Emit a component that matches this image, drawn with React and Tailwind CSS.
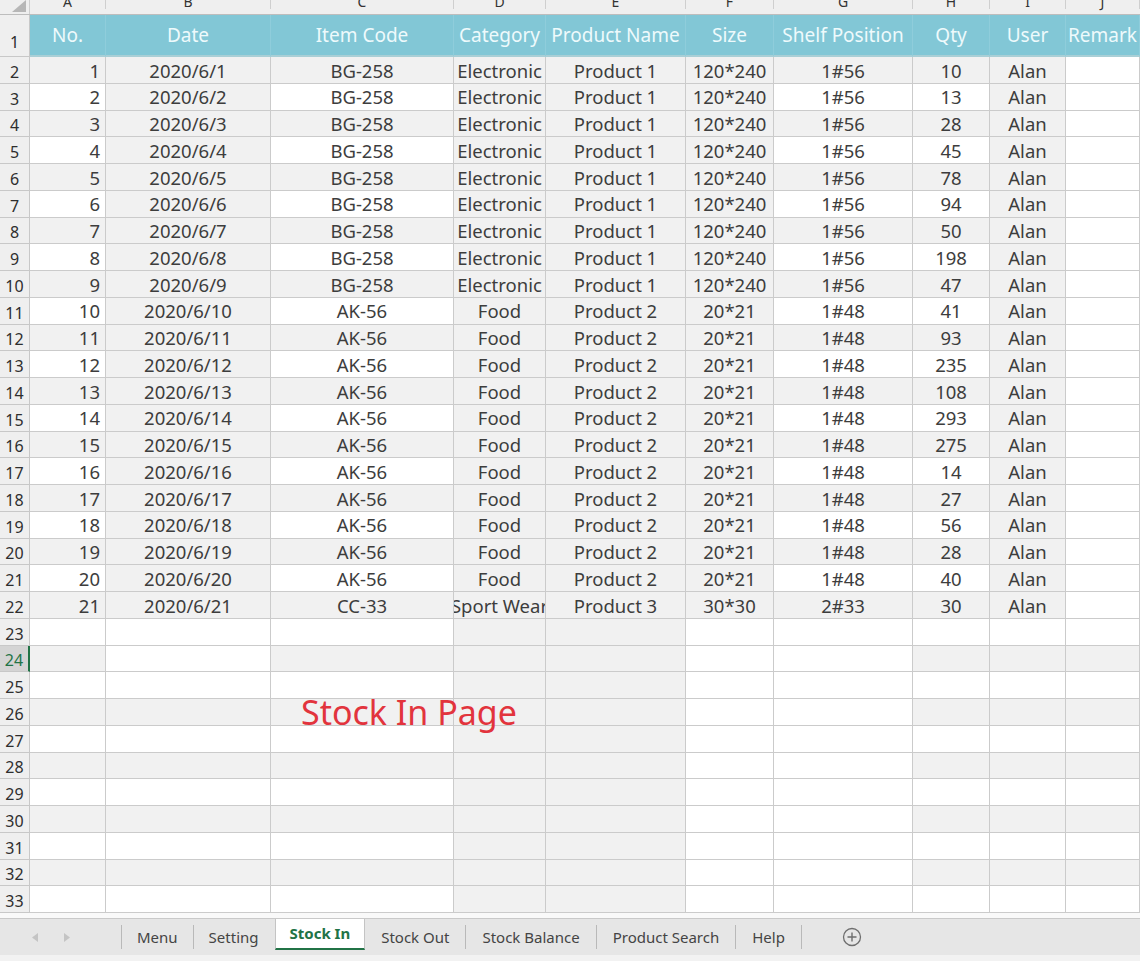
import React from "react";

// sheet columns: width, header text, alignment of body cells
const columns = [
  { key: "A", w: 76, title: "No.", align: "right" },
  { key: "B", w: 165, title: "Date" },
  { key: "C", w: 183, title: "Item Code" },
  { key: "D", w: 92, title: "Category" },
  { key: "E", w: 140, title: "Product Name" },
  { key: "F", w: 88, title: "Size" },
  { key: "G", w: 139, title: "Shelf Position" },
  { key: "H", w: 77, title: "Qty" },
  { key: "I", w: 76, title: "User" },
  { key: "J", w: 74, title: "Remark" },
];

const gridCols =
  "grid grid-cols-[30px_76px_165px_183px_92px_140px_88px_139px_77px_76px_74px]";

const qtys = [10, 13, 28, 45, 78, 94, 50, 198, 47, 41, 93, 235, 108, 293, 275, 14, 27, 56, 28, 40, 30];

const records = qtys.map((qty, i) => {
  const n = i + 1;
  let item = ["BG-258", "Electronic", "Product 1", "120*240", "1#56"];
  if (n >= 10 && n <= 20) item = ["AK-56", "Food", "Product 2", "20*21", "1#48"];
  if (n === 21) item = ["CC-33", "Sport Wear", "Product 3", "30*30", "2#33"];
  return [String(n), `2020/6/${n}`, ...item, String(qty), "Alan", ""];
});

// fill pattern per column: "all" shaded, "even" shaded on even sheet rows, "none" plain
const dataFill = { A: "even", B: "all", C: "even", D: "all", E: "all", F: "all", G: "even", H: "even", I: "all", J: "none" };
const blankFill = { A: "even", B: "even", C: "even", D: "all", E: "all", F: "none", G: "none", H: "even", I: "even", J: "even" };

const isShaded = (col, row) => {
  const mode = row <= 22 ? dataFill[col] : blankFill[col];
  if (row === 24 && col === "B") return false;
  if (mode === "all") return true;
  if (mode === "even") return row % 2 === 0;
  return false;
};

const font = { fontFamily: '"Noto Sans", "Open Sans", sans-serif' };

const CornerTriangle = () => (
  <svg width="16" height="12" viewBox="0 0 16 12" className="absolute left-[10px] top-0">
    <polygon points="16,0 16,12 2,12" fill="#b7b7b7" />
  </svg>
);

// column letters sit at the top edge of the window, half scrolled out
const ColumnLetters = () => (
  <div className={`${gridCols} h-[15px] overflow-hidden bg-[#efefef] border-b border-[#bdbdbd]`}>
    <div className="relative border-r border-[#cfcfcf]">
      <CornerTriangle />
    </div>
    {columns.map((c) => (
      <div
        key={c.key}
        className="flex justify-center border-r border-[#cfcfcf] text-[14px] leading-none text-[#333] -translate-y-[5px]"
      >
        {c.key}
      </div>
    ))}
  </div>
);

const HeaderRow = () => (
  <div className={`${gridCols} h-[42px]`}>
    <div className="flex items-end justify-center pb-[2px] bg-[#efefef] border-r border-b border-[#c8c8c8] text-[16px] text-[#2e2e2e]">
      1
    </div>
    {columns.map((c) => (
      <div
        key={c.key}
        className="flex items-center justify-center overflow-hidden whitespace-nowrap bg-[#82c7d6] border-r border-[#8fcddb] border-b-2 border-b-[#a9cfd6] pt-[1px] text-[19px] text-[#eefafc]"
      >
        {c.title}
      </div>
    ))}
  </div>
);

const SheetRow = ({ row, values }) => {
  const selected = row === 24;
  return (
    <div className={`${gridCols} h-[26.75px]`}>
      <div
        className={`flex items-end justify-center border-b border-[#c8c8c8] text-[16px] leading-[22px] ${
          selected
            ? "bg-[#d4d4d4] text-[#217346] border-r-2 border-r-[#217346]"
            : "bg-[#efefef] text-[#2e2e2e] border-r border-r-[#c8c8c8]"
        }`}
      >
        {row}
      </div>
      {columns.map((c, i) => (
        <div
          key={c.key}
          className={`flex items-center overflow-hidden whitespace-nowrap border-r border-b border-[#cbcbcb] pt-[1px] text-[18.5px] text-[#3d3d3d] ${
            c.align === "right" ? "justify-end pr-[5px]" : "justify-center"
          } ${isShaded(c.key, row) ? "bg-[#f1f1f1]" : "bg-white"}`}
        >
          {values ? values[i] : ""}
        </div>
      ))}
    </div>
  );
};

const NavArrow = ({ dir }) => (
  <svg width="6" height="9" viewBox="0 0 6 9">
    {dir === "left" ? (
      <polygon points="6,0 6,9 0,4.5" fill="#c4c4c4" />
    ) : (
      <polygon points="0,0 0,9 6,4.5" fill="#c4c4c4" />
    )}
  </svg>
);

const Divider = () => <div className="w-px h-[24px] bg-[#b9b9b9]" />;

const SheetTabs = () => {
  const before = ["Menu", "Setting"];
  const after = ["Stock Out", "Stock Balance", "Product Search", "Help"];
  return (
    <div className="flex flex-col">
      <div className="h-[5px] bg-[#f9f9f9]" />
      <div className="flex items-center h-[37px] bg-[#e6e6e6] border-t border-[#c9c9c9] text-[15px] text-[#444]">
        <div className="flex items-center w-[121px] pl-[32px] gap-[26px]">
          <NavArrow dir="left" />
          <NavArrow dir="right" />
        </div>
        <Divider />
        {before.map((t, i) => (
          <React.Fragment key={t}>
            <div className="px-[15px]">{t}</div>
            {i === 0 && <Divider />}
          </React.Fragment>
        ))}
        <div className="self-start flex items-center h-[31px] ml-[1px] px-[14px] bg-white border-x border-[#c4c4c4] border-b-2 border-b-[#217346] font-bold text-[#217346]">
          Stock In
        </div>
        {after.map((t) => (
          <React.Fragment key={t}>
            <div className="px-[16px]">{t}</div>
            <Divider />
          </React.Fragment>
        ))}
        <div className="ml-[40px]">
          <svg width="20" height="20" viewBox="0 0 20 20">
            <circle cx="10" cy="10" r="8.5" fill="none" stroke="#6e6e6e" strokeWidth="1.3" />
            <path d="M10 5.5v9M5.5 10h9" stroke="#6e6e6e" strokeWidth="1.4" />
          </svg>
        </div>
      </div>
      <div className="h-[6px] bg-[#f2f2f2]" />
    </div>
  );
};

export default function App() {
  const blankRows = Array.from({ length: 11 }, (_, i) => 23 + i);

  return (
    <div className="w-[1140px] h-[961px] overflow-hidden bg-white" style={font}>
      <div className="relative w-[1140px] overflow-hidden">
        <ColumnLetters />
        <HeaderRow />
        {records.map((values, i) => (
          <SheetRow key={i} row={i + 2} values={values} />
        ))}
        {blankRows.map((r) => (
          <SheetRow key={r} row={r} />
        ))}
        {/* floating text box on the sheet */}
        <div className="absolute left-[301px] top-[695px] text-[34px] leading-none text-[#e2343d]">
          Stock In Page
        </div>
      </div>
      <SheetTabs />
    </div>
  );
}
